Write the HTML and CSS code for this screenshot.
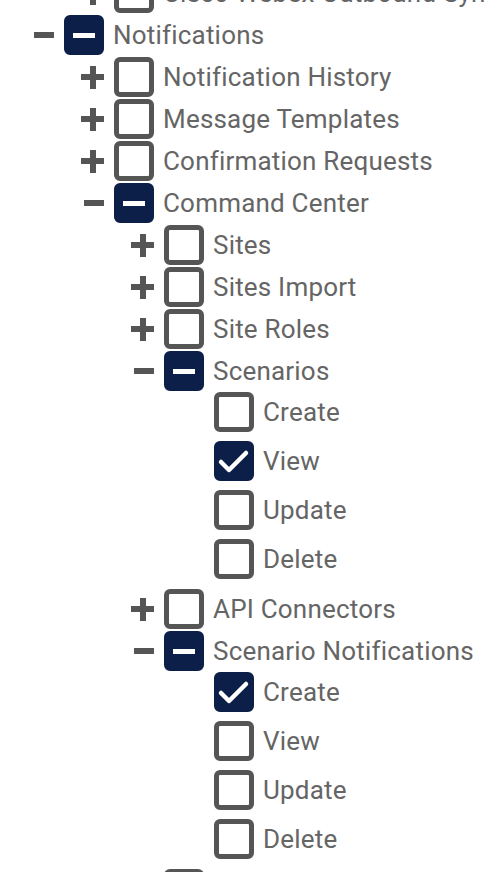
FILE: index.html
```html
<!DOCTYPE html>
<html lang="en">
<head>
  <meta charset="UTF-8">
  <meta name="viewport" content="width=device-width, initial-scale=1.0">
  <title>Permissions</title>
  <link rel="stylesheet" href="styles.css">
</head>
<body>
  <ul class="tree">
    <li>
      <div class="node">
        <span class="toggle"><span class="minus"></span></span>
        <span class="box partial"></span>
        <span class="label">Integrations</span>
      </div>
      <ul>
        <li>
          <div class="node">
            <span class="toggle"><span class="plus"></span></span>
            <span class="box"></span>
            <span class="label">Cisco Webex Outbound Sync</span>
          </div>
        </li>
      </ul>
    </li>
    <li>
      <div class="node">
        <span class="toggle"><span class="minus"></span></span>
        <span class="box partial"></span>
        <span class="label">Notifications</span>
      </div>
      <ul>
        <li>
          <div class="node">
            <span class="toggle"><span class="plus"></span></span>
            <span class="box"></span>
            <span class="label">Notification History</span>
          </div>
        </li>
        <li>
          <div class="node">
            <span class="toggle"><span class="plus"></span></span>
            <span class="box"></span>
            <span class="label">Message Templates</span>
          </div>
        </li>
        <li>
          <div class="node">
            <span class="toggle"><span class="plus"></span></span>
            <span class="box"></span>
            <span class="label">Confirmation Requests</span>
          </div>
        </li>
        <li>
          <div class="node">
            <span class="toggle"><span class="minus"></span></span>
            <span class="box partial"></span>
            <span class="label">Command Center</span>
          </div>
          <ul>
            <li>
              <div class="node">
                <span class="toggle"><span class="plus"></span></span>
                <span class="box"></span>
                <span class="label">Sites</span>
              </div>
            </li>
            <li>
              <div class="node">
                <span class="toggle"><span class="plus"></span></span>
                <span class="box"></span>
                <span class="label">Sites Import</span>
              </div>
            </li>
            <li>
              <div class="node">
                <span class="toggle"><span class="plus"></span></span>
                <span class="box"></span>
                <span class="label">Site Roles</span>
              </div>
            </li>
            <li>
              <div class="node">
                <span class="toggle"><span class="minus"></span></span>
                <span class="box partial"></span>
                <span class="label">Scenarios</span>
              </div>
              <ul>
                <li class="leaf"><span class="toggle"></span><span class="box"></span><span class="label">Create</span></li>
                <li class="leaf"><span class="toggle"></span><span class="box checked"><svg viewBox="0 0 40 40"><polyline points="7,21 15,29 32,12"/></svg></span><span class="label">View</span></li>
                <li class="leaf"><span class="toggle"></span><span class="box"></span><span class="label">Update</span></li>
                <li class="leaf"><span class="toggle"></span><span class="box"></span><span class="label">Delete</span></li>
              </ul>
            </li>
            <li>
              <div class="node">
                <span class="toggle"><span class="plus"></span></span>
                <span class="box"></span>
                <span class="label">API Connectors</span>
              </div>
            </li>
            <li>
              <div class="node">
                <span class="toggle"><span class="minus"></span></span>
                <span class="box partial"></span>
                <span class="label">Scenario Notifications</span>
              </div>
              <ul>
                <li class="leaf"><span class="toggle"></span><span class="box checked"><svg viewBox="0 0 40 40"><polyline points="7,21 15,29 32,12"/></svg></span><span class="label">Create</span></li>
                <li class="leaf"><span class="toggle"></span><span class="box"></span><span class="label">View</span></li>
                <li class="leaf"><span class="toggle"></span><span class="box"></span><span class="label">Update</span></li>
                <li class="leaf"><span class="toggle"></span><span class="box"></span><span class="label">Delete</span></li>
              </ul>
            </li>
            <li>
              <div class="node">
                <span class="toggle"><span class="plus"></span></span>
                <span class="box"></span>
                <span class="label">Site Groups</span>
              </div>
            </li>
          </ul>
        </li>
      </ul>
    </li>
  </ul>
</body>
</html>
```

FILE: styles.css
```css
body {
  margin: 0;
  background: #fff;
  font-family: Roboto, "Liberation Sans", sans-serif;
  color: #656565;
  overflow: hidden;
  height: 872px;
}

ul {
  list-style: none;
  margin: 0;
  padding: 0 0 0 50px;
}

.tree {
  padding-left: 30px;
  margin-top: -70px;
  white-space: nowrap;
}

.node,
.leaf {
  display: flex;
  align-items: center;
  height: 42px;
}

.leaf {
  align-items: flex-start;
  height: 40px;
  margin-bottom: 9px;
}

.toggle {
  width: 24px;
  padding-right: 10px;
  height: 40px;
  display: flex;
  align-items: center;
  justify-content: flex-end;
  flex-shrink: 0;
}

.minus {
  width: 20px;
  height: 6px;
  background: #555;
}

.plus {
  width: 23px;
  height: 23px;
  position: relative;
}

.plus:before,
.plus:after {
  content: "";
  position: absolute;
  background: #555;
}

.plus:before {
  left: 0;
  right: 0;
  top: 8.5px;
  height: 6px;
}

.plus:after {
  top: 0;
  bottom: 0;
  left: 8.5px;
  width: 6px;
}

.box {
  width: 40px;
  height: 40px;
  box-sizing: border-box;
  border: 5px solid #555;
  border-radius: 6px;
  background: #fff;
  flex-shrink: 0;
  display: flex;
  align-items: center;
  justify-content: center;
}

.box.partial,
.box.checked {
  background: #0b1f48;
  border-color: #0b1f48;
}

.box.partial:after {
  content: "";
  width: 22px;
  height: 5px;
  background: #fff;
}

.box.checked svg {
  width: 40px;
  height: 40px;
  flex-shrink: 0;
}

.box.checked polyline {
  fill: none;
  stroke: #fff;
  stroke-width: 4.5;
  stroke-linecap: round;
  stroke-linejoin: round;
}

.label {
  margin-left: 9px;
  font-size: 26px;
  letter-spacing: 0.2px;
  line-height: 40px;
}
```
